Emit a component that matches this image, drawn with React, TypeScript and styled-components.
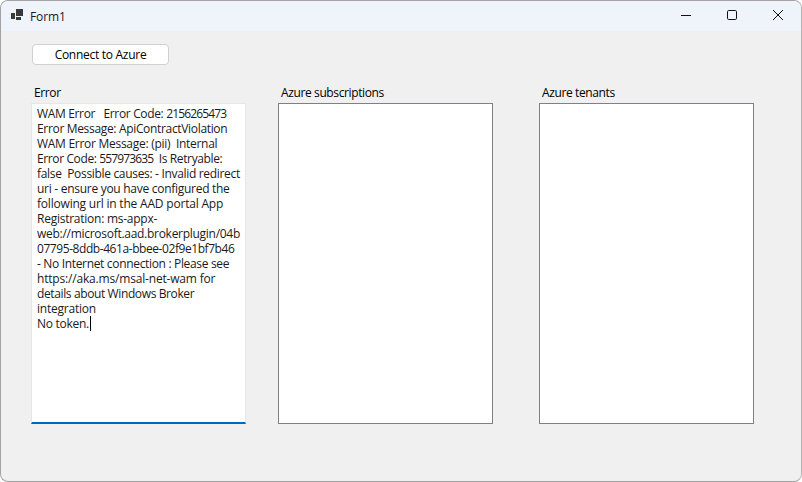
import React from 'react'
import styled, { createGlobalStyle } from 'styled-components'

const GlobalStyle = createGlobalStyle`
  html, body {
    margin: 0;
    padding: 0;
    background: #ffffff;
  }
`

const Window = styled.div`
  box-sizing: border-box;
  width: 802px;
  height: 482px;
  display: flex;
  flex-direction: column;
  overflow: hidden;
  background: #f0f0f0;
  border: 1px solid #a3a3a3;
  border-right-color: #b4b4b4;
  border-radius: 8px;
  font-family: "Open Sans", "Noto Sans", sans-serif;
  font-size: 12px;
  color: #000000;
`

const TitleBar = styled.div`
  flex: none;
  height: 30px;
  display: flex;
  align-items: center;
  background: #eff4fb;
  padding-left: 10px;
`

const AppIcon = styled.svg`
  width: 12px;
  height: 11px;
  margin: 0 7px 3px 0;
  fill: #3a3a3a;
`

const TitleText = styled.span`
  flex: 1;
  font-size: 12px;
  letter-spacing: -0.1px;
  color: #1a1a1a;
`

const WindowButton = styled.div`
  box-sizing: border-box;
  width: 46px;
  height: 30px;
  padding-bottom: 2px;
  display: flex;
  align-items: center;
  justify-content: center;
  stroke: #111111;
`

const Content = styled.div`
  flex: 1;
  display: flex;
  flex-direction: column;
  padding: 13px 0 0 30px;
`

const ConnectButton = styled.button`
  box-sizing: border-box;
  width: 137px;
  height: 21px;
  margin: 0 0 0 1px;
  padding: 0;
  background: #ffffff;
  border: 1px solid #d0d0d0;
  border-radius: 4px;
  font: inherit;
  letter-spacing: -0.28px;
  color: #000000;
`

const Columns = styled.div`
  display: grid;
  grid-template-columns: 247px 261px 215px;
  margin-top: 19px;
`

const Column = styled.div`
  display: flex;
  flex-direction: column;
`

const Label = styled.div`
  height: 19px;
  line-height: 17px;
  padding-left: 3px;
  white-space: nowrap;
  letter-spacing: -0.38px;
`

const ListBox = styled.div`
  box-sizing: border-box;
  width: 215px;
  height: 321px;
  background: #ffffff;
  border: 1px solid #7f7f86;
`

const LogBox = styled.div`
  box-sizing: border-box;
  width: 215px;
  height: 321px;
  padding: 2px 0 0 5px;
  background: #ffffff;
  border: 1px solid #e6e6e6;
  border-bottom: 2px solid #0067c0;
`

const LogLine = styled.div<{ $spacing: number }>`
  height: 15px;
  line-height: 15px;
  white-space: pre;
  letter-spacing: ${p => p.$spacing}px;
  color: #1a1a1a;
`

const LongNumber = styled.span`
  letter-spacing: -0.86px;
`

const Caret = styled.span`
  display: inline-block;
  width: 1px;
  height: 15px;
  margin-left: 1px;
  vertical-align: top;
  background: #000000;
`

const logLines = [
  { text: 'WAM Error   Error Code: 2156265473', spacing: -0.34 },
  { text: 'Error Message: ApiContractViolation', spacing: -0.33 },
  { text: 'WAM Error Message: (pii)  Internal', spacing: -0.28 },
  { text: 'Error Code: 557973635  Is Retryable:', spacing: -0.38 },
  { text: 'false  Possible causes: - Invalid redirect', spacing: -0.32 },
  { text: 'uri - ensure you have configured the', spacing: -0.28 },
  { text: 'following url in the AAD portal App', spacing: -0.2 },
  { text: 'Registration: ms-appx-', spacing: -0.25 },
  { text: 'web://microsoft.aad.brokerplugin/04b', spacing: -0.28 },
  { text: '07795-8ddb-461a-bbee-02f9e1bf7b46', spacing: -0.43 },
  { text: '- No Internet connection : Please see', spacing: -0.33 },
  { text: 'https://aka.ms/msal-net-wam for', spacing: -0.18 },
  { text: 'details about Windows Broker', spacing: -0.38 },
  { text: 'integration', spacing: -0.22 },
]

// the long error codes run narrower than the rest of the line
function renderLine(text: string) {
  return text.split(/(\d{9,})/).map((part, i) =>
    i % 2 === 1 ? <LongNumber key={part}>{part}</LongNumber> : part
  )
}

export default function App() {
  return (
    <>
      <GlobalStyle />
      <Window>
        <TitleBar>
          <AppIcon viewBox="0 0 12 11">
            <rect x="0" y="4" width="4" height="6" />
            <rect x="5" y="0" width="7" height="7" />
            <rect x="5" y="8" width="5" height="3" />
          </AppIcon>
          <TitleText>Form1</TitleText>
          <WindowButton>
            <svg width="10" height="10" viewBox="0 0 10 10" fill="none">
              <path d="M0 5.5H10" />
            </svg>
          </WindowButton>
          <WindowButton>
            <svg width="10" height="10" viewBox="0 0 10 10" fill="none">
              <rect x="0.5" y="0.5" width="9" height="9" rx="1.2" />
            </svg>
          </WindowButton>
          <WindowButton>
            <svg width="10" height="10" viewBox="0 0 10 10" fill="none">
              <path d="M0 0L10 10M10 0L0 10" />
            </svg>
          </WindowButton>
        </TitleBar>
        <Content>
          <ConnectButton>Connect to Azure</ConnectButton>
          <Columns>
            <Column>
              <Label>Error</Label>
              <LogBox>
                {logLines.map(line => (
                  <LogLine key={line.text} $spacing={line.spacing}>
                    {renderLine(line.text)}
                  </LogLine>
                ))}
                <LogLine $spacing={-0.28}>
                  No token.
                  <Caret />
                </LogLine>
              </LogBox>
            </Column>
            <Column>
              <Label>Azure subscriptions</Label>
              <ListBox />
            </Column>
            <Column>
              <Label>Azure tenants</Label>
              <ListBox />
            </Column>
          </Columns>
        </Content>
      </Window>
    </>
  )
}
